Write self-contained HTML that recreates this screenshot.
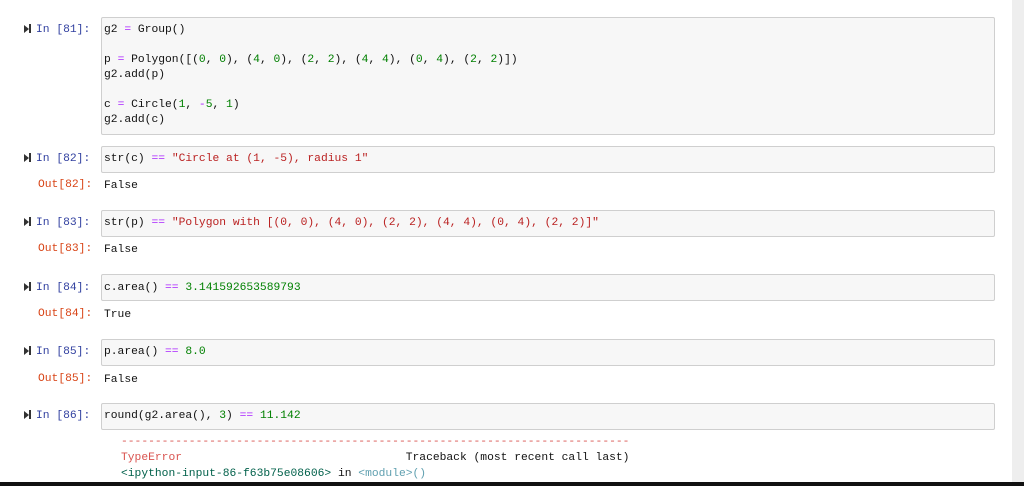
<!DOCTYPE html>
<html><head><style>
body{margin:0;width:1024px;height:486px;background:#eee;overflow:hidden;position:relative;font-family:"Liberation Mono",monospace;font-size:11.3px;}
.page{position:absolute;left:0;top:0;width:1012px;height:482px;background:#fff;}
.bar{position:absolute;left:0;top:482px;width:1024px;height:4px;background:#111;}
.box{position:absolute;left:101px;width:892px;background:#f7f7f7;border:1px solid #cfcfcf;border-radius:2px;}
.code{position:absolute;left:104px;line-height:15px;white-space:pre;color:#111;}
.in{position:absolute;left:24px;white-space:pre;color:#303f9f;}
.in b{display:inline-block;width:2px;height:9px;background:#333;margin-right:5px;vertical-align:-1px}
.in i{display:inline-block;width:0;height:0;border-left:5px solid #333;border-top:4.5px solid transparent;border-bottom:4.5px solid transparent;vertical-align:-1px;margin-right:0}
.out{position:absolute;left:38px;white-space:pre;color:#d84315;}
.o{color:#aa22ff}.n{color:#008000}.s{color:#ba2121}.r{color:#d9534f}.c{color:#60a0b0}
</style></head><body>
<div class="page"></div>
<div class="in" style="top:24px"><i></i><b></b>In [81]:</div>
<div class="box" style="top:17px;height:116px"></div>
<div class="code" style="top:23px">g2 <span class="o">=</span> Group()

p <span class="o">=</span> Polygon([(<span class="n">0</span>, <span class="n">0</span>), (<span class="n">4</span>, <span class="n">0</span>), (<span class="n">2</span>, <span class="n">2</span>), (<span class="n">4</span>, <span class="n">4</span>), (<span class="n">0</span>, <span class="n">4</span>), (<span class="n">2</span>, <span class="n">2</span>)])
g2.add(p)

c <span class="o">=</span> Circle(<span class="n">1</span>, <span class="o">-</span><span class="n">5</span>, <span class="n">1</span>)
g2.add(c)</div>

<div class="in" style="top:153px"><i></i><b></b>In [82]:</div>
<div class="box" style="top:146px;height:25px"></div>
<div class="code" style="top:152px">str(c) <span class="o">==</span> <span class="s">"Circle at (1, -5), radius 1"</span></div>
<div class="out" style="top:179px">Out[82]:</div>
<div class="code" style="top:179px">False</div>

<div class="in" style="top:217px"><i></i><b></b>In [83]:</div>
<div class="box" style="top:210px;height:25px"></div>
<div class="code" style="top:216px">str(p) <span class="o">==</span> <span class="s">"Polygon with [(0, 0), (4, 0), (2, 2), (4, 4), (0, 4), (2, 2)]"</span></div>
<div class="out" style="top:243px">Out[83]:</div>
<div class="code" style="top:243px">False</div>

<div class="in" style="top:282px"><i></i><b></b>In [84]:</div>
<div class="box" style="top:274px;height:25px"></div>
<div class="code" style="top:281px">c.area() <span class="o">==</span> <span class="n">3.141592653589793</span></div>
<div class="out" style="top:308px">Out[84]:</div>
<div class="code" style="top:308px">True</div>

<div class="in" style="top:346px"><i></i><b></b>In [85]:</div>
<div class="box" style="top:339px;height:25px"></div>
<div class="code" style="top:345px">p.area() <span class="o">==</span> <span class="n">8.0</span></div>
<div class="out" style="top:373px">Out[85]:</div>
<div class="code" style="top:373px">False</div>

<div class="in" style="top:410px"><i></i><b></b>In [86]:</div>
<div class="box" style="top:403px;height:25px"></div>
<div class="code" style="top:409px">round(g2.area(), <span class="n">3</span>) <span class="o">==</span> <span class="n">11.142</span></div>

<div class="code" style="top:434px;left:121px;line-height:16px"><span class="r">---------------------------------------------------------------------------</span>
<span class="r">TypeError</span>                                 Traceback (most recent call last)
<span style="color:#00604a">&lt;ipython-input-86-f63b75e08606&gt;</span> in <span class="c">&lt;module&gt;</span><span class="c">()</span></div>
<div class="bar"></div>
</body></html>
